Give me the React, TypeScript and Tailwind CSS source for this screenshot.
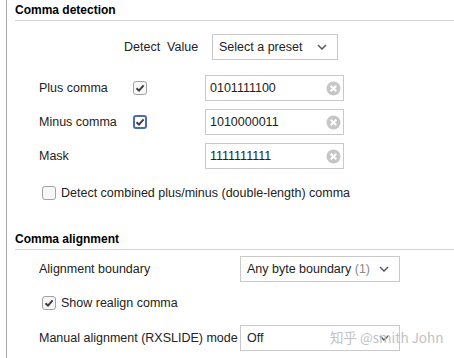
import React from "react";

const font = { fontFamily: '"Liberation Sans", Arial, "Noto Sans CJK SC", sans-serif' };

function Check({ blue = false, checked = true }: { blue?: boolean; checked?: boolean }) {
  return (
    <div
      className={
        "w-[14px] h-[14px] rounded-[3px] flex items-center justify-center " +
        (blue ? "border-2 border-[#4a6cb3] bg-white" : "border border-[#a2a2a2] bg-[#f7f7f7]")
      }
    >
      {checked && (
        <svg width="10" height="10" viewBox="0 0 10 10">
          <polyline points="1.5,5.2 4,7.6 8.6,2.4" fill="none" stroke="#3c3c3c" strokeWidth="2" />
        </svg>
      )}
    </div>
  );
}

function Chevron() {
  return (
    <svg width="10" height="6" viewBox="0 0 10 6">
      <polyline points="1,1 5,5 9,1" fill="none" stroke="#5a5a5a" strokeWidth="1.5" />
    </svg>
  );
}

function ClearIcon() {
  return (
    <svg width="15" height="15" viewBox="0 0 15 15">
      <circle cx="7.5" cy="7.5" r="7" fill="#c6c6c6" />
      <line x1="4.7" y1="4.7" x2="10.3" y2="10.3" stroke="#fff" strokeWidth="2" />
      <line x1="10.3" y1="4.7" x2="4.7" y2="10.3" stroke="#fff" strokeWidth="2" />
    </svg>
  );
}

function TextInput({ value }: { value: string }) {
  return (
    <div className="w-[139px] h-[26px] border border-[#c9c9c9] flex items-center justify-between pl-[4px] pr-[2px]">
      <span>{value}</span>
      <ClearIcon />
    </div>
  );
}

function Select({ text, extra, w }: { text: string; extra?: string; w: string }) {
  return (
    <div className={"h-[26px] border border-[#c9c9c9] flex items-center justify-between pl-[6px] pr-[10px] " + w}>
      <span className="whitespace-nowrap">
        {text}
        {extra && <span className="text-[#8a8a8a]"> {extra}</span>}
      </span>
      <Chevron />
    </div>
  );
}

export default function App() {
  return (
    <div
      className="w-[454px] h-[358px] bg-white overflow-hidden relative text-[12.5px] leading-[14px] text-[#222]"
      style={font}
    >
      <div className="ml-[6px] h-full border-l border-[#a9a9a9] pl-[8px]">
        <div className="pt-[3px] pb-[3px] border-b border-[#d4d4d4] font-bold text-black text-[12px]">Comma detection</div>

        <div className="mt-[13px] flex items-center">
          <span className="ml-[109px] w-[88px] whitespace-nowrap">Detect&nbsp; Value</span>
          <Select text="Select a preset" w="w-[126px]" />
        </div>

        <div className="mt-[15px] flex flex-col gap-[8px]">
          <div className="flex items-center">
            <span className="ml-[24px] w-[94px]">Plus comma</span>
            <Check />
            <div className="ml-[58px]">
              <TextInput value="0101111100" />
            </div>
          </div>
          <div className="flex items-center">
            <span className="ml-[24px] w-[94px]">Minus comma</span>
            <Check blue />
            <div className="ml-[58px]">
              <TextInput value="1010000011" />
            </div>
          </div>
          <div className="flex items-center">
            <span className="ml-[24px] w-[166px]">Mask</span>
            <TextInput value="1111111111" />
          </div>
        </div>

        <div className="mt-[17px] flex items-center ml-[27px] gap-[5px]">
          <Check checked={false} />
          <span className="whitespace-nowrap">Detect combined plus/minus (double-length) comma</span>
        </div>

        <div className="mt-[29px] pt-[3px] pb-[3px] border-b border-[#d4d4d4] font-bold text-black text-[12px]">
          Comma alignment
        </div>

        <div className="mt-[6px] flex items-center">
          <span className="ml-[24px] w-[201px]">Alignment boundary</span>
          <Select text="Any byte boundary" extra="(1)" w="w-[160px]" />
        </div>

        <div className="mt-[14px] flex items-center ml-[27px] gap-[5px]">
          <Check />
          <span>Show realign comma</span>
        </div>

        <div className="mt-[15px] flex items-center">
          <span className="ml-[24px] w-[201px] whitespace-nowrap">Manual alignment (RXSLIDE) mode</span>
          <Select text="Off" w="w-[160px]" />
        </div>
      </div>

      <div
        className="absolute left-[330px] top-[329px] whitespace-nowrap text-[13.5px] leading-[17px] text-[#c2c2c2]"
        style={{ fontFamily: '"Noto Sans CJK SC", "Liberation Sans", sans-serif' }}
      >
        知乎 @smith John
      </div>
    </div>
  );
}
